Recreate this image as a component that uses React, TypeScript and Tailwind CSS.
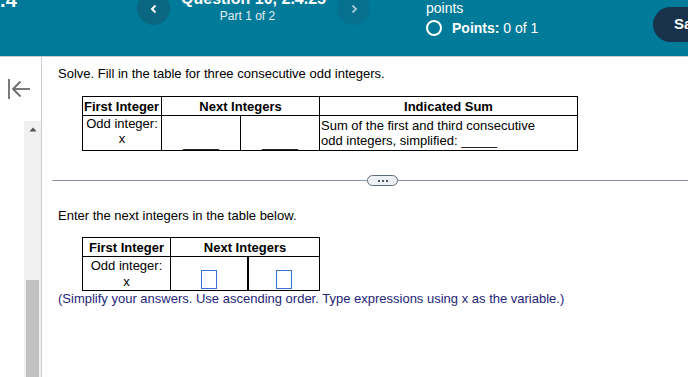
import React from "react";

function Dots() {
  return (
    <>
      <span className="w-[2px] h-[2px] bg-[#4a5568]" />
      <span className="w-[2px] h-[2px] bg-[#4a5568]" />
      <span className="w-[2px] h-[2px] bg-[#4a5568]" />
    </>
  );
}

export default function App() {
  return (
    <div className="w-[688px] h-[377px] overflow-hidden bg-white flex flex-col font-['Liberation_Sans',Arial,sans-serif] text-black">
      <header className="h-[57px] shrink-0 bg-[#007a99] border-b border-[#c9ced6] flex items-start overflow-hidden text-white">
        <div className="w-[137px] shrink-0 overflow-hidden">
          <div className="-ml-[11px] -mt-[11px] text-[20px] leading-[23px] font-bold whitespace-nowrap">2.4</div>
        </div>
        <div className="w-[33px] h-[33px] shrink-0 -mt-[8px] rounded-full bg-[#0b6682] flex items-center justify-center">
          <svg width="8" height="10" viewBox="0 0 8 10">
            <polyline points="5.5,1.5 2,5 5.5,8.5" fill="none" stroke="white" strokeWidth="2" />
          </svg>
        </div>
        <div className="w-[167px] shrink-0 flex flex-col items-center">
          <div className="-mt-[11px] text-[16px] leading-[19px] font-bold whitespace-nowrap">Question 10, 2.4.25</div>
          <div className="mt-[1px] mr-[12px] text-[12px] leading-[14px] text-[#e3eff4]">Part 1 of 2</div>
        </div>
        <div className="w-[33px] h-[33px] shrink-0 -mt-[8px] rounded-full bg-[#06718f] flex items-center justify-center">
          <svg width="8" height="10" viewBox="0 0 8 10">
            <polyline points="2.5,1.5 6,5 2.5,8.5" fill="none" stroke="#9cc6d4" strokeWidth="2" />
          </svg>
        </div>
        <div className="ml-[56px] w-[227px] shrink-0 flex flex-col">
          <div className="text-[14px] leading-[16px]">points</div>
          <div className="mt-[4px] flex items-center h-[16px]">
            <span className="w-[16px] h-[16px] rounded-full border-2 border-white" />
            <span className="ml-[10px] text-[14px] leading-[16px]">
              <b>Points:</b> 0 of 1
            </span>
          </div>
        </div>
        <div className="w-[80px] h-[35px] shrink-0 mt-[7px] rounded-full bg-[#17324a] flex items-center pl-[21px] text-[15px] font-bold whitespace-nowrap">
          Save
        </div>
      </header>

      <div className="flex flex-1 min-h-0">
        <aside className="w-[42px] shrink-0 border-r border-[#c9ced6] flex flex-col">
          <svg className="ml-[8px] mt-[22px]" width="23" height="20" viewBox="0 0 23 20">
            <line x1="1" y1="0" x2="1" y2="20" stroke="#6b6b6b" strokeWidth="1.8" />
            <line x1="5" y1="10" x2="22" y2="10" stroke="#6b6b6b" strokeWidth="1.8" />
            <polyline points="12.5,2.5 5,10 12.5,17.5" fill="none" stroke="#6b6b6b" strokeWidth="1.8" />
          </svg>
          <div className="ml-auto mt-[22px] w-[17px] flex-1 bg-[#f1f1f1] flex flex-col items-center">
            <svg className="mt-[6px]" width="8" height="5" viewBox="0 0 8 5">
              <polygon points="0.5,4.5 4,0.5 7.5,4.5" fill="#505050" />
            </svg>
            <div className="mt-auto w-[13px] h-[97px] bg-[#c1c1c1]" />
          </div>
        </aside>

        <main className="flex-1 min-w-0 pt-[9px] text-[13px] leading-[15px]">
          <p className="pl-[16px]">Solve. Fill in the table for three consecutive odd integers.</p>

          <table className="ml-[40px] mt-[15px] border-collapse table-fixed w-[496px]">
            <colgroup>
              <col className="w-[79px]" />
              <col className="w-[79px]" />
              <col className="w-[79px]" />
              <col />
            </colgroup>
            <tbody>
              <tr className="h-[19px]">
                <td className="border border-black font-bold px-[1px] whitespace-nowrap">First Integer</td>
                <td colSpan={2} className="border border-black font-bold text-center">Next Integers</td>
                <td className="border border-black font-bold text-center">Indicated Sum</td>
              </tr>
              <tr className="h-[35px]">
                <td className="border border-black text-center align-top p-0">
                  Odd integer:
                  <br />x
                </td>
                <td className="border border-black text-center align-bottom p-0">_____</td>
                <td className="border border-black text-center align-bottom p-0">_____</td>
                <td className="border border-black align-middle px-[1px] py-0">
                  Sum of the first and third consecutive
                  <br />
                  odd integers, simplified: _____
                </td>
              </tr>
            </tbody>
          </table>

          <div className="mt-[24px] ml-[10px] flex items-center h-[11px]">
            <div className="w-[315px] h-px bg-[#8c95a3]" />
            <div className="w-[31px] h-[11px] shrink-0 rounded-full border border-[#5f6b7a] bg-[#eef1f5] flex items-center justify-center gap-[2px]">
              <Dots />
            </div>
            <div className="flex-1 h-px bg-[#8c95a3]" />
          </div>

          <p className="pl-[16px] mt-[22px]">Enter the next integers in the table below.</p>

          <table className="ml-[40px] mt-[14px] border-collapse table-fixed w-[238px]">
            <colgroup>
              <col className="w-[88px]" />
              <col className="w-[77px]" />
              <col />
            </colgroup>
            <tbody>
              <tr className="h-[19px]">
                <td className="border border-black font-bold text-center whitespace-nowrap">First Integer</td>
                <td colSpan={2} className="border border-black font-bold text-center">Next Integers</td>
              </tr>
              <tr className="h-[34px]">
                <td className="border border-black text-center align-top pt-[1px] leading-[16px]">
                  Odd integer:
                  <br />x
                </td>
                <td className="border border-black border-r-2 align-bottom p-0 pb-[1px]">
                  <div className="mx-auto w-[16px] h-[19px] border-[1.5px] border-[#3a6fd8]" />
                </td>
                <td className="border border-black align-bottom p-0 pb-[1px]">
                  <div className="mx-auto w-[16px] h-[19px] border-[1.5px] border-[#3a6fd8]" />
                </td>
              </tr>
            </tbody>
          </table>
          <p className="pl-[16px] text-[#25257a]">
            (Simplify your answers. Use ascending order. Type expressions using x as the variable.)
          </p>
        </main>
      </div>
    </div>
  );
}
